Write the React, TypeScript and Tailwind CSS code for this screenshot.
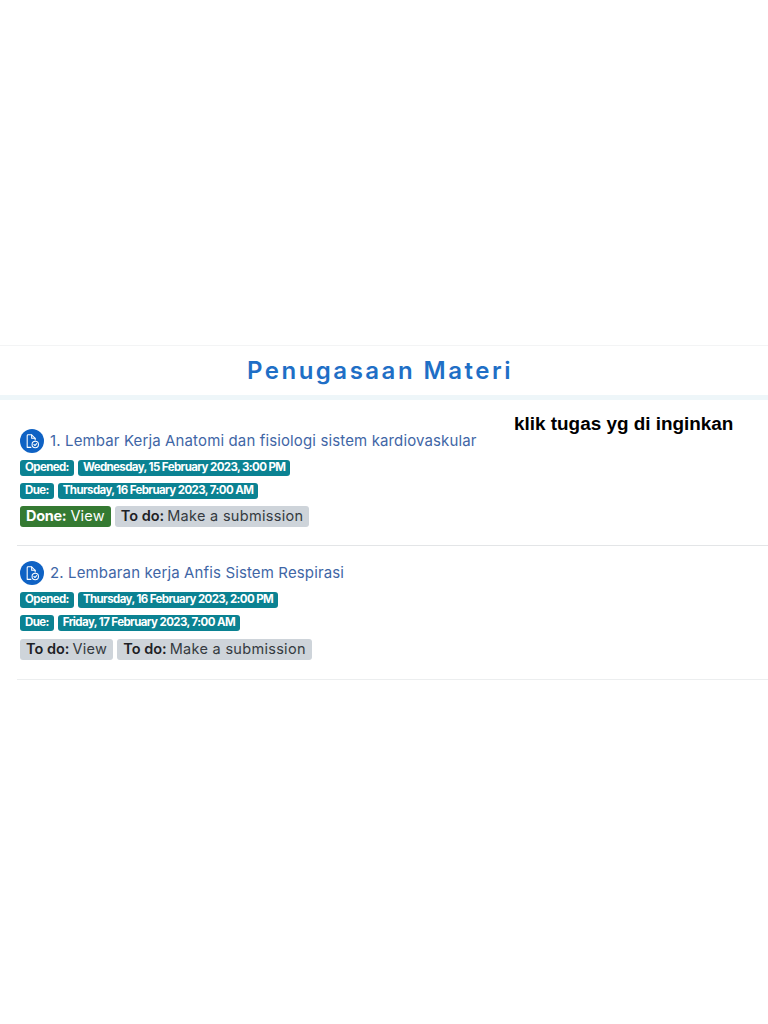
const font = "font-['Inter','Noto_Sans',sans-serif]";

function AssignIcon() {
  return (
    <span className="flex h-6 w-6 shrink-0 items-center justify-center rounded-full bg-[#0f62c4]">
      <svg width="17" height="17" viewBox="0 0 16 16" fill="none" stroke="#ffffff" strokeWidth="1" strokeLinecap="round" strokeLinejoin="round">
        <path d="M6.5 13.5H3V2.5c0-.5.3-.8.8-.8h3.4L10.5 5v1.6" />
        <path d="M7.2 1.8V5h3.3" />
        <circle cx="10.6" cy="10.8" r="3" />
        <path d="M9.3 10.8l1 1 1.6-1.8" />
      </svg>
    </span>
  );
}

function Teal({ children }: { children: React.ReactNode }) {
  return (
    <span className="flex h-[16px] items-center rounded-[3px] bg-[#0b8292] px-[5px] text-[11.5px] font-bold leading-none tracking-[-0.6px] text-white">
      {children}
    </span>
  );
}

function Status({ label, value, done }: { label: string; value: string; done?: boolean }) {
  return (
    <span
      className={
        done
          ? "flex h-[21px] items-center gap-[4px] rounded-[3px] bg-[#357a32] px-[6px] text-[14.5px] leading-none tracking-[0.2px] text-white"
          : "flex h-[21px] items-center gap-[3px] rounded-[3px] bg-[#ced4da] px-[6px] text-[14.5px] leading-none tracking-[0.3px] text-[#343a40]"
      }
    >
      <span className={done ? "font-bold tracking-[-0.3px]" : "font-semibold tracking-[0px] text-[#1d2125]"}>{label}</span>
      <span>{value}</span>
    </span>
  );
}

function Task(props: {
  title: string;
  opened: string;
  due: string;
  first: React.ReactNode;
  second: React.ReactNode;
  className: string;
  statusClassName: string;
}) {
  return (
    <div className={props.className}>
      <div className="flex items-center gap-[6px] pl-[3px]">
        <AssignIcon />
        <span className="text-[15px] leading-6 tracking-[0.13px] text-[#3f66a6]">{props.title}</span>
      </div>
      <div className="mt-[7px] flex gap-[4px] pl-[3px]">
        <Teal>Opened:</Teal>
        <Teal>{props.opened}</Teal>
      </div>
      <div className="mt-[7px] flex gap-[4px] pl-[3px]">
        <Teal>Due:</Teal>
        <Teal>{props.due}</Teal>
      </div>
      <div className={props.statusClassName}>
        {props.first}
        {props.second}
      </div>
    </div>
  );
}

export default function App() {
  return (
    <div className={`${font} min-h-[1024px] bg-white pt-[345px]`}>
      <div className="relative">
        <header className="flex h-[50px] items-center justify-center border-t border-[#f3f4f5]">
          <h1 className="pr-[8px] text-[24px] font-semibold tracking-[2.5px] text-[#1f6fc6]">Penugasaan Materi</h1>
        </header>
        <div className="h-[5px] bg-[#eef6f9]" />

        <main className="pl-[17px]">
          <Task
            className="h-[146px] border-b border-[#e3e5e7] pt-[29px]"
            statusClassName="mt-[7px] flex gap-[4px] pl-[3px]"
            title="1. Lembar Kerja Anatomi dan fisiologi sistem kardiovaskular"
            opened="Wednesday, 15 February 2023, 3:00 PM"
            due="Thursday, 16 February 2023, 7:00 AM"
            first={<Status done label="Done:" value="View" />}
            second={<Status label="To do:" value="Make a submission" />}
          />
          <Task
            className="h-[134px] border-b border-[#eceeef] pt-[15px]"
            statusClassName="mt-[8px] flex gap-[4px] pl-[3px]"
            title="2. Lembaran kerja Anfis Sistem Respirasi"
            opened="Thursday, 16 February 2023, 2:00 PM"
            due="Friday, 17 February 2023, 7:00 AM"
            first={<Status label="To do:" value="View" />}
            second={<Status label="To do:" value="Make a submission" />}
          />
        </main>

        <span className="absolute left-[514px] top-[68px] font-['Liberation_Sans',sans-serif] text-[18.9px] font-bold leading-[22px] text-black">
          klik tugas yg di inginkan
        </span>
      </div>
    </div>
  );
}
